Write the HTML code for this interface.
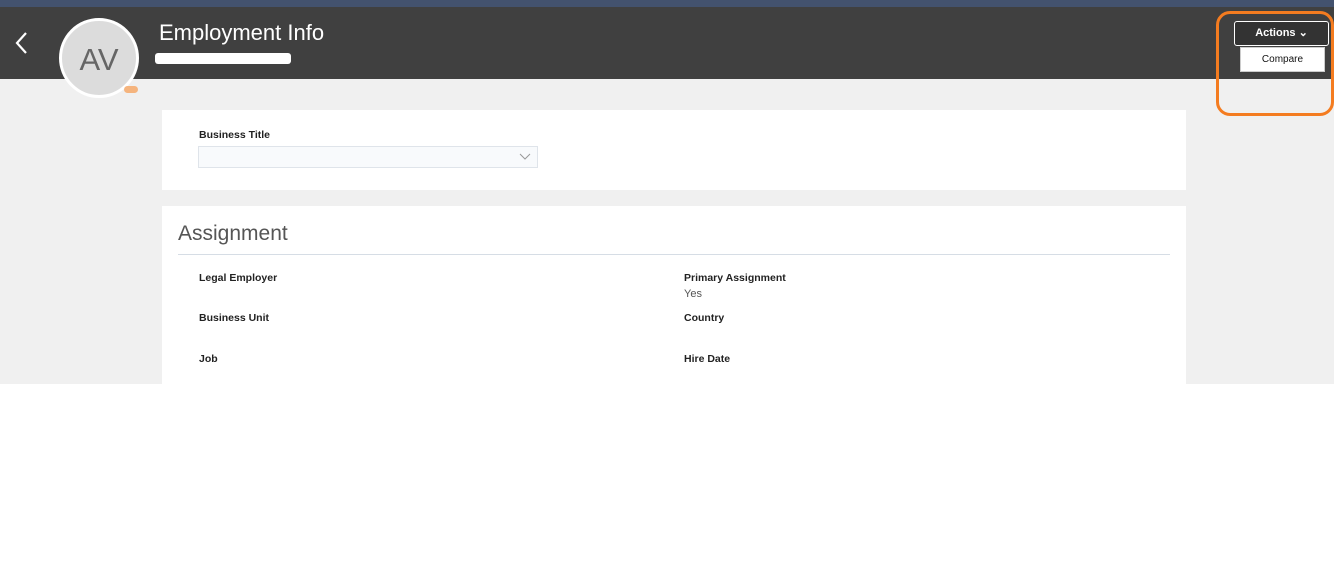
<!DOCTYPE html>
<html><head><style>
body{margin:0;width:1334px;height:562px;background:#fff;font-family:"Liberation Sans",sans-serif;position:relative;overflow:hidden}
.abs{position:absolute}
.lbl{position:absolute;font-size:10.5px;color:#222;font-weight:bold}
</style></head><body>
<div class="abs" style="left:0;top:0;width:1334px;height:384px;background:#f0f0f0"></div>
<div class="abs" style="left:0;top:0;width:1334px;height:7px;background:#43526e"></div>
<div class="abs" style="left:0;top:7px;width:1334px;height:72px;background:#404040"></div>
<svg class="abs" style="left:14px;top:31px" width="16" height="24"><path d="M12 2 L3 12 L12 22" stroke="#fff" stroke-width="2.2" fill="none"/></svg>
<div class="abs" style="left:59px;top:18px;width:80px;height:80px;border-radius:50%;background:#dcdcdc;border:3px solid #fff;box-sizing:border-box;text-align:center;line-height:78px;font-size:31px;color:#666">AV</div>
<div class="abs" style="left:124px;top:86px;width:14px;height:7px;border-radius:4px;background:#f5b47e"></div>
<div class="abs" style="left:159px;top:20px;font-size:22px;color:#fff">Employment Info</div>
<div class="abs" style="left:155px;top:53px;width:136px;height:11px;background:#fff;border-radius:3px"></div>
<div class="abs" style="left:1234px;top:21px;width:95px;height:25px;border:1px solid #fff;border-radius:3px;background:#333;box-sizing:border-box;color:#fff;font-size:11px;font-weight:bold;text-align:center;line-height:23px">Actions &#8964;</div>
<div class="abs" style="left:1240px;top:47px;width:85px;height:25px;background:#fff;border:1px solid #ccc;box-sizing:border-box;font-size:10px;text-align:center;line-height:23px;color:#111">Compare</div>
<div class="abs" style="left:1216px;top:11px;width:118px;height:105px;border:3px solid #f47c20;border-radius:14px;box-sizing:border-box"></div>
<div class="abs" style="left:162px;top:110px;width:1024px;height:80px;background:#fff"></div>
<div class="lbl" style="left:199px;top:129px">Business Title</div>
<div class="abs" style="left:198px;top:146px;width:340px;height:22px;border:1px solid #dfe4ea;background:#f8fafc;box-sizing:border-box"></div>
<svg class="abs" style="left:519px;top:153px" width="12" height="8"><path d="M1 1 L6 6 L11 1" stroke="#999" fill="none"/></svg>
<div class="abs" style="left:162px;top:206px;width:1024px;height:178px;background:#fff"></div>
<div class="abs" style="left:178px;top:222px;font-size:21px;color:#555">Assignment</div>
<div class="abs" style="left:178px;top:254px;width:992px;height:1px;background:#d6dde5"></div>
<div class="lbl" style="left:199px;top:272px">Legal Employer</div>
<div class="lbl" style="left:199px;top:312px">Business Unit</div>
<div class="lbl" style="left:199px;top:353px">Job</div>
<div class="lbl" style="left:684px;top:272px">Primary Assignment</div>
<div class="abs" style="left:684px;top:288px;font-size:11px;color:#555">Yes</div>
<div class="lbl" style="left:684px;top:312px">Country</div>
<div class="lbl" style="left:684px;top:353px">Hire Date</div>
</body></html>
